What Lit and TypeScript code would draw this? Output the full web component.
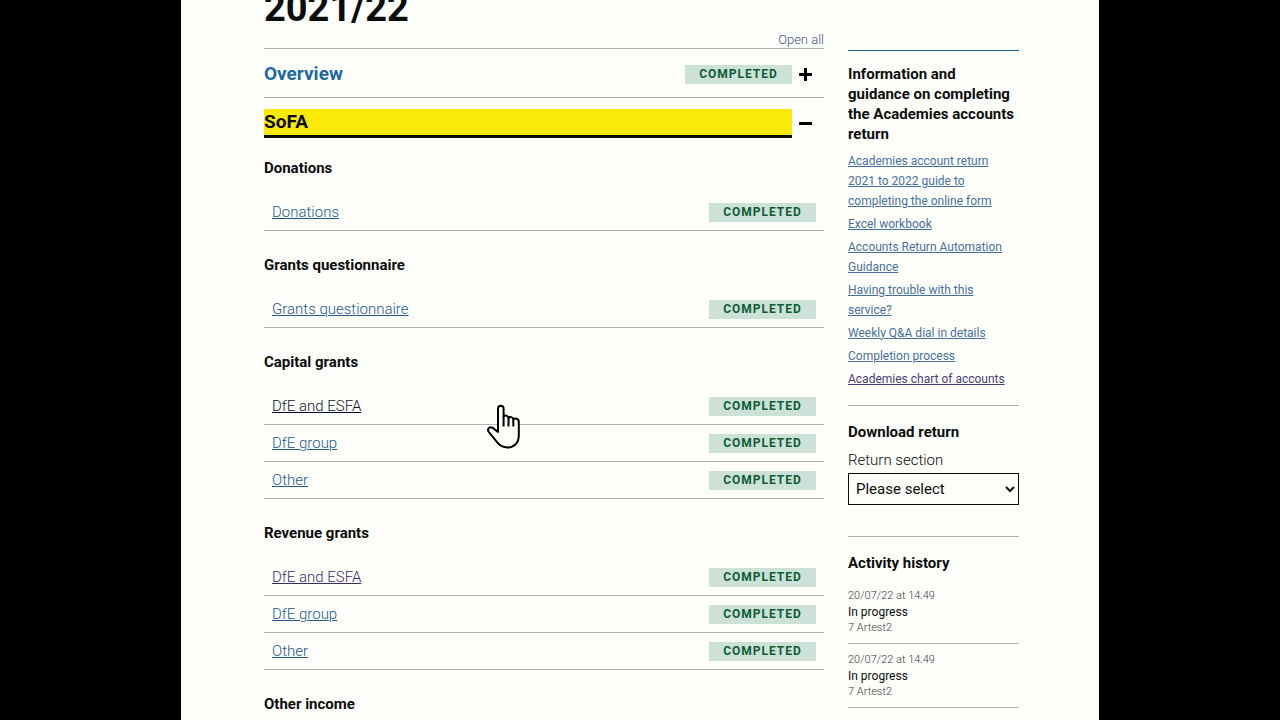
import { LitElement, html, css, svg } from "lit";
import { customElement } from "lit/decorators.js";
import { classMap } from "lit/directives/class-map.js";

type Tone = "link" | "visited" | "hover";
interface Task { label: string; tone: Tone }
interface Group { title: string; tasks: Task[] }

const groups: Group[] = [
  { title: "Donations", tasks: [{ label: "Donations", tone: "link" }] },
  { title: "Grants questionnaire", tasks: [{ label: "Grants questionnaire", tone: "link" }] },
  {
    title: "Capital grants",
    tasks: [
      { label: "DfE and ESFA", tone: "hover" },
      { label: "DfE group", tone: "link" },
      { label: "Other", tone: "link" },
    ],
  },
  {
    title: "Revenue grants",
    tasks: [
      { label: "DfE and ESFA", tone: "visited" },
      { label: "DfE group", tone: "link" },
      { label: "Other", tone: "link" },
    ],
  },
  { title: "Other income", tasks: [] },
];

const guidance: Task[] = [
  { label: "Academies account return 2021 to 2022 guide to completing the online form", tone: "link" },
  { label: "Excel workbook", tone: "link" },
  { label: "Accounts Return Automation Guidance", tone: "link" },
  { label: "Having trouble with this service?", tone: "link" },
  { label: "Weekly Q&A dial in details", tone: "link" },
  { label: "Completion process", tone: "link" },
  { label: "Academies chart of accounts", tone: "visited" },
];

const history = [
  { date: "20/07/22 at 14:49", status: "In progress", user: "7 Artest2" },
  { date: "20/07/22 at 14:49", status: "In progress", user: "7 Artest2" },
];

const link = (t: Task) =>
  html`<a href="#" class=${classMap({ visited: t.tone === "visited", hover: t.tone === "hover" })}>${t.label}</a>`;

@customElement("app-root")
export class AppRoot extends LitElement {
  static styles = css`
    * { box-sizing: border-box; }
    :host {
      display: block;
      height: 100vh;
      overflow: hidden;
      position: relative;
      padding: 0 181px;
      background: #000;
      color: #0b0c0c;
      font-family: Roboto, "Liberation Sans", sans-serif;
      font-size: 15px;
      font-weight: 300;
      line-height: 20px;
    }
    h1, h2, h3, p, ul { margin: 0; padding: 0; }
    ul { list-style: none; }
    button { border: 0; padding: 0; background: none; font: inherit; color: inherit; text-align: left; }
    a { color: #22598f; text-underline-offset: 1px; text-decoration-thickness: 1px; }
    a.visited { color: #3b2a66; }
    a.hover { color: #0b1030; }
    .page { min-height: 100%; background: #fffffb; padding: 0 80px 0 83px; }
    .columns { display: grid; grid-template-columns: minmax(0, 1fr) 171px; column-gap: 24px; }
    h1 { margin-top: -14px; font-size: 38px; line-height: 44px; font-weight: 700; }
    .controls { display: flex; justify-content: flex-end; padding-top: 2px; border-bottom: 1px solid #b1b4b6; }
    .openall { font-size: 13px; line-height: 16px; color: #3c5488; }
    .bar { display: flex; align-items: center; gap: 7px; padding-right: 12px; }
    .bar h2 { flex: 1; font-size: 19px; line-height: 26px; font-weight: 700; }
    .bar button { display: block; width: 100%; }
    .closed { height: 49px; padding-top: 2px; border-bottom: 1px solid #b1b4b6; }
    .closed h2 { color: #1f68a6; }
    .open { padding-top: 11px; }
    .open h2 { background: #fbe908; border-bottom: 3px solid #0b0c0c; }
    .icon { display: block; width: 13px; height: 13px; }
    .tag {
      display: block;
      width: 107px;
      font-size: 12px;
      line-height: 19px;
      font-weight: 700;
      letter-spacing: 1px;
      text-align: center;
      text-transform: uppercase;
      color: #0f5b36;
      background: #cce2d8;
    }
    .group { padding: 20px 0 4px; }
    .group h3 { margin-bottom: 16px; }
    h3 { font-size: 15px; line-height: 20px; font-weight: 700; }
    .task {
      display: flex;
      justify-content: space-between;
      align-items: center;
      height: 37px;
      padding: 0 8px;
      border-bottom: 1px solid #b1b4b6;
    }
    aside { padding-top: 50px; }
    .panel { border-top: 1px solid #b1b4b6; padding-top: 16px; }
    .first { border-top-color: #1d5f95; padding: 13px 0 16px; }
    .links { display: grid; row-gap: 3px; padding: 7px 8px 0 0; font-size: 12px; font-weight: 400; }
    .links a { color: #47709c; }
    .links a.visited { color: #4c3a76; }
    .download { padding-bottom: 31px; }
    .download label { display: block; margin: 8px 0 3px; }
    select {
      display: block;
      width: 100%;
      height: 32px;
      padding: 0 3px;
      border: 1px solid #0b0c0c;
      border-radius: 0;
      background: #fffffb;
      color: #0b0c0c;
      font: inherit;
      font-weight: 400;
    }
    .history { padding-top: 7px; font-size: 11px; line-height: 16px; }
    .history li { padding: 8px 0 7px; border-bottom: 1px solid #b1b4b6; }
    .meta { color: #343c40; }
    .status { font-size: 12px; font-weight: 400; }
    .cursor { position: absolute; left: 486px; top: 404px; width: 35px; height: 46px; }
  `;

  render() {
    return html`
      <div class="page">
        <div class="columns">
          <main>
            <h1>2021/22</h1>
            <div class="controls"><button class="openall">Open all</button></div>
            <div class="bar closed">
              <h2><button aria-expanded="false">Overview</button></h2>
              <strong class="tag">Completed</strong>
              ${this.sign(true)}
            </div>
            <div class="bar open">
              <h2><button aria-expanded="true">SoFA</button></h2>
              ${this.sign(false)}
            </div>
            ${groups.map((g) => html`
              <section class="group">
                <h3>${g.title}</h3>
                <ul>
                  ${g.tasks.map((t) => html`<li class="task">${link(t)}<strong class="tag">Completed</strong></li>`)}
                </ul>
              </section>`)}
          </main>
          <aside>
            <section class="panel first">
              <h3>Information and guidance on completing the Academies accounts return</h3>
              <ul class="links">${guidance.map((g) => html`<li>${link(g)}</li>`)}</ul>
            </section>
            <section class="panel download">
              <h3>Download return</h3>
              <label for="section">Return section</label>
              <select id="section"><option>Please select</option></select>
            </section>
            <section class="panel">
              <h3>Activity history</h3>
              <ul class="history">
                ${history.map((h) => html`
                  <li>
                    <p class="meta">${h.date}</p>
                    <p class="status">${h.status}</p>
                    <p class="meta">${h.user}</p>
                  </li>`)}
              </ul>
            </section>
          </aside>
        </div>
      </div>
      <svg class="cursor" viewBox="0 0 35 46" aria-hidden="true">
        <path
          d="M12 26V4.500a2.800 2.800 0 0 1 5.600 0V12.500c1-1.500 4.300-1.200 4.900 1.200 1.200-1.200 4.200-.8 4.800 1.300 1.700-1.100 5.500-.5 5.500 3V31.500C32.800 39 28 43.500 21.500 43.500c-5 0-8-2-10.500-5.300L2.500 27.500c-1.500-2.500 1.200-5.600 4.300-3.600L12 28z"
          fill="#fffffb" stroke="#000" stroke-width="2" stroke-linejoin="round"
        />
        <path d="M17.600 12v10.500M22.500 13.500v9M27.300 15v7.500" fill="none" stroke="#000" stroke-width="2" />
      </svg>
    `;
  }

  private sign(plus: boolean) {
    return html`<svg class="icon" viewBox="0 0 13 13" aria-hidden="true">
      <path d="M0 5h13v3H0z" />
      ${plus ? svg`<path d="M5 0h3v13H5z" />` : null}
    </svg>`;
  }
}
